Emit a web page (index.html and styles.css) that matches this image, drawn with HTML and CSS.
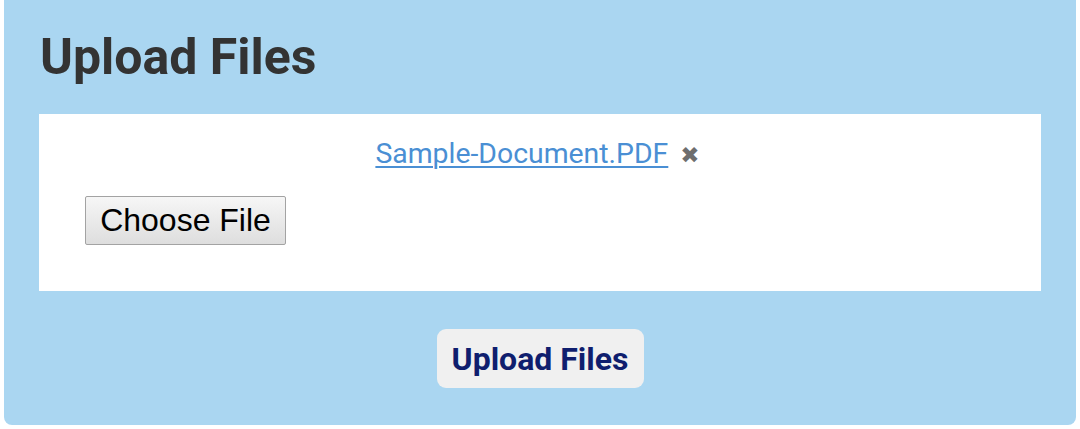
FILE: index.html
```html
<!DOCTYPE html>
<html>
<head>
<meta charset="utf-8">
<link rel="stylesheet" href="styles.css">
</head>
<body>
<div class="panel">
  <h1 class="title">Upload Files</h1>
  <div class="dropzone">
    <div class="file-row">
      <a class="file-link" href="#">Sample-Document.PDF</a>
      <span class="remove">&#x2716;</span>
    </div>
    <div class="chooser">
      <button class="choose" type="button">Choose File</button>
    </div>
  </div>
  <div class="actions">
    <button class="upload" type="button">Upload Files</button>
  </div>
</div>
</body>
</html>
```
FILE: styles.css
```css
html, body {
  margin: 0;
  padding: 0;
  background: #ffffff;
}
body {
  width: 1080px;
  height: 429px;
  overflow: hidden;
}
.panel {
  margin: 0 4px;
  height: 425px;
  box-sizing: border-box;
  background: #aad6f1;
  border-radius: 0 0 8px 8px;
  padding: 29px 35px 0 35px;
}
.title {
  margin: 0 0 0 1px;
  font-family: Roboto, "Noto Sans", sans-serif;
  font-weight: 700;
  font-size: 50px;
  line-height: 56px;
  color: #333333;
}
.dropzone {
  margin-top: 29px;
  background: #ffffff;
  height: 177px;
  box-sizing: border-box;
  padding: 22px 46px 0 46px;
}
.file-row {
  display: flex;
  justify-content: center;
  align-items: baseline;
  gap: 12px;
  height: 38px;
  padding-right: 5px;
}
.file-link {
  font-family: Roboto, "Noto Sans", sans-serif;
  font-size: 28.4px;
  line-height: 36px;
  color: #4a8fd4;
  text-decoration: underline;
  text-decoration-thickness: 2px;
  text-underline-offset: 3px;
}
.remove {
  font-family: "DejaVu Sans", sans-serif;
  font-size: 23px;
  color: #6e6e6e;
}
.chooser {
  margin-top: 22px;
}
.choose {
  width: 201px;
  height: 49px;
  font-family: "Liberation Sans", Arial, sans-serif;
  font-size: 32px;
  color: #000000;
  background: linear-gradient(#f6f6f6, #dedede);
  border: 1px solid #a3a3a3;
  border-radius: 2px;
  padding: 0;
}
.actions {
  display: flex;
  justify-content: center;
  margin-top: 38px;
}
.upload {
  width: 207px;
  height: 59px;
  background: #f0f0f0;
  border: none;
  border-radius: 9px;
  font-family: Roboto, "Noto Sans", sans-serif;
  font-weight: 700;
  font-size: 32px;
  color: #0f1e6e;
  padding: 0;
}
```
